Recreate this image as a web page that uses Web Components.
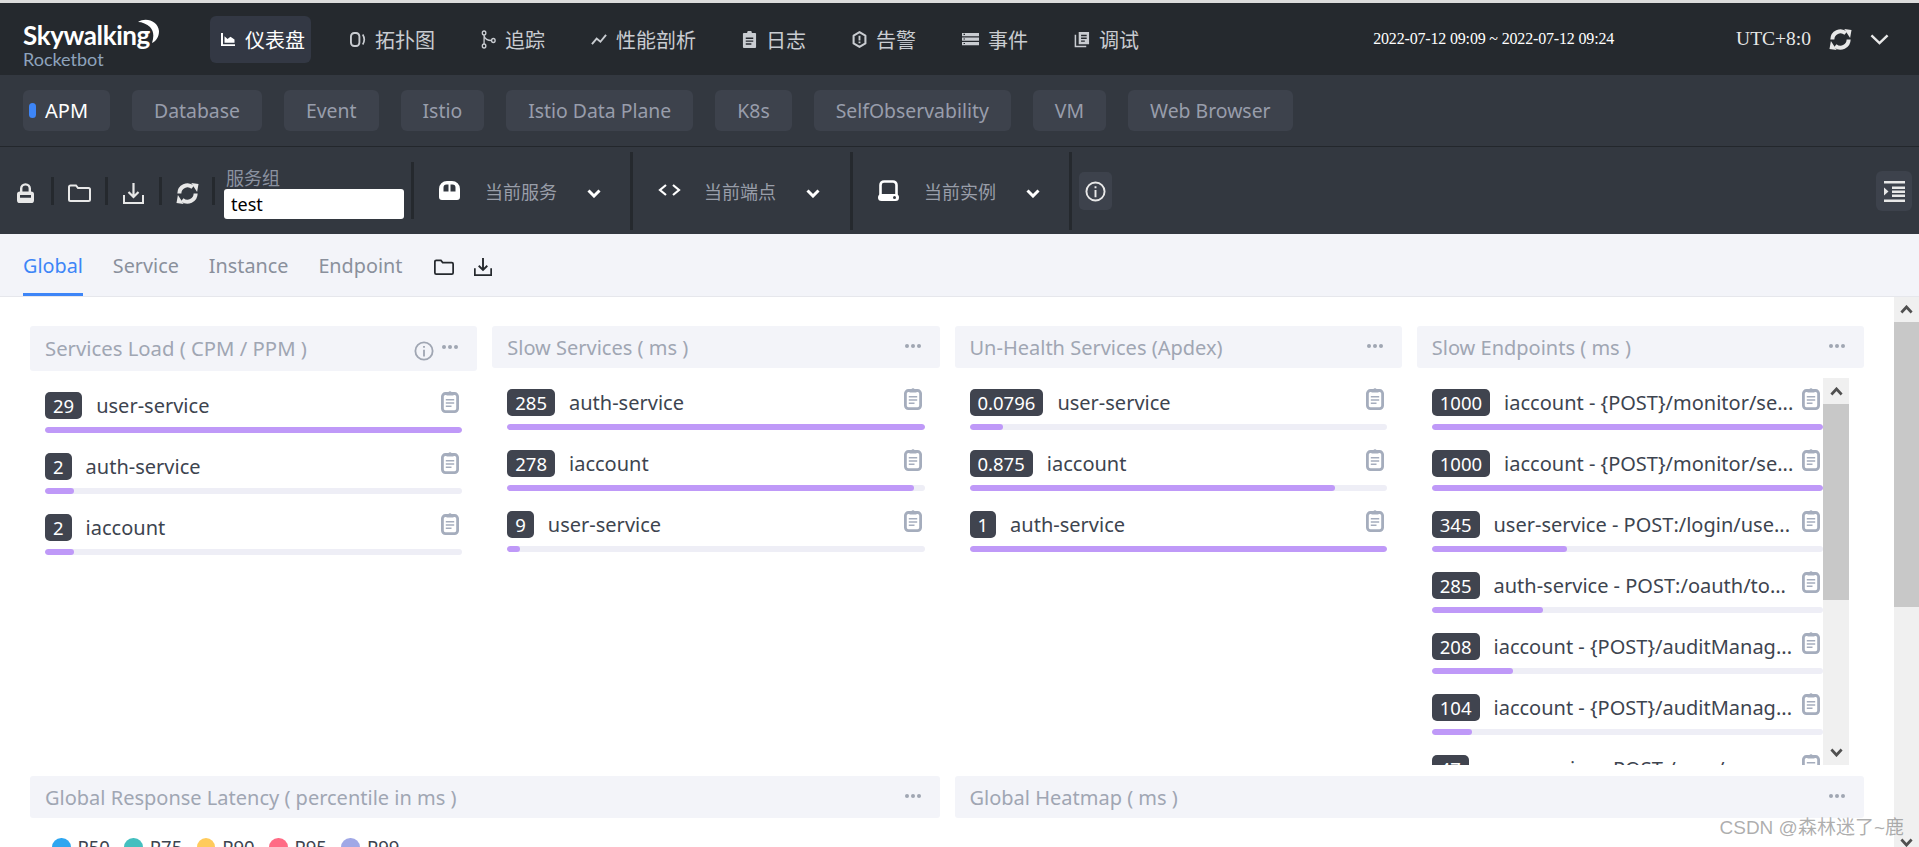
<!DOCTYPE html>
<html lang="zh">
<head>
<meta charset="utf-8">
<title>Skywalking Rocketbot</title>
<style>
  html, body { margin: 0; height: 100%; }
  body { height: 847px; overflow: hidden; background: #fff; border-top: 3px solid #dcdcdc; box-sizing: border-box;
    font-family: "Noto Sans", "Noto Sans CJK SC", sans-serif; position: relative; }
  .main { display: flex; height: 550px; overflow: hidden; }
</style>
</head>
<body>
  <sw-header>
    <sw-nav-item icon="dashboard" active>仪表盘</sw-nav-item>
    <sw-nav-item icon="topology">拓扑图</sw-nav-item>
    <sw-nav-item icon="trace">追踪</sw-nav-item>
    <sw-nav-item icon="profile">性能剖析</sw-nav-item>
    <sw-nav-item icon="log">日志</sw-nav-item>
    <sw-nav-item icon="alarm">告警</sw-nav-item>
    <sw-nav-item icon="event">事件</sw-nav-item>
    <sw-nav-item icon="debug">调试</sw-nav-item>
  </sw-header>

  <sw-layer-bar>
    <sw-layer-tab active>APM</sw-layer-tab>
    <sw-layer-tab>Database</sw-layer-tab>
    <sw-layer-tab>Event</sw-layer-tab>
    <sw-layer-tab>Istio</sw-layer-tab>
    <sw-layer-tab>Istio Data Plane</sw-layer-tab>
    <sw-layer-tab>K8s</sw-layer-tab>
    <sw-layer-tab>SelfObservability</sw-layer-tab>
    <sw-layer-tab>VM</sw-layer-tab>
    <sw-layer-tab>Web Browser</sw-layer-tab>
  </sw-layer-bar>

  <sw-toolbar>
    <sw-selector icon="service" style="--w:219px">当前服务</sw-selector>
    <sw-selector icon="code">当前端点</sw-selector>
    <sw-selector icon="instance" style="--w:219px">当前实例</sw-selector>
  </sw-toolbar>

  <sw-tabs>
    <sw-tab active>Global</sw-tab>
    <sw-tab>Service</sw-tab>
    <sw-tab>Instance</sw-tab>
    <sw-tab>Endpoint</sw-tab>
  </sw-tabs>

  <div class="main">
    <sw-grid>
      <sw-panel heading="Services Load ( CPM / PPM )" info>
        <sw-rank-item value="29" pct="100">user-service</sw-rank-item>
        <sw-rank-item value="2" pct="7">auth-service</sw-rank-item>
        <sw-rank-item value="2" pct="7">iaccount</sw-rank-item>
      </sw-panel>
      <sw-panel heading="Slow Services ( ms )">
        <sw-rank-item value="285" pct="100">auth-service</sw-rank-item>
        <sw-rank-item value="278" pct="97.5">iaccount</sw-rank-item>
        <sw-rank-item value="9" pct="3">user-service</sw-rank-item>
      </sw-panel>
      <sw-panel heading="Un-Health Services (Apdex)">
        <sw-rank-item value="0.0796" pct="8">user-service</sw-rank-item>
        <sw-rank-item value="0.875" pct="87.5">iaccount</sw-rank-item>
        <sw-rank-item value="1" pct="100">auth-service</sw-rank-item>
      </sw-panel>
      <sw-panel heading="Slow Endpoints ( ms )" scroll>
        <sw-rank-item value="1000" pct="100">iaccount - {POST}/monitor/se...</sw-rank-item>
        <sw-rank-item value="1000" pct="100">iaccount - {POST}/monitor/se...</sw-rank-item>
        <sw-rank-item value="345" pct="34.5">user-service - POST:/login/use...</sw-rank-item>
        <sw-rank-item value="285" pct="28.5">auth-service - POST:/oauth/to...</sw-rank-item>
        <sw-rank-item value="208" pct="20.8">iaccount - {POST}/auditManag...</sw-rank-item>
        <sw-rank-item value="104" pct="10.4">iaccount - {POST}/auditManag...</sw-rank-item>
        <sw-rank-item value="47" pct="4.7">user-service - POST:/user/comp...</sw-rank-item>
      </sw-panel>
      <sw-panel heading="Global Response Latency ( percentile in ms )" style="grid-column: span 2">
        <sw-legend>
          <sw-legend-item color="#2ea6f0">P50</sw-legend-item>
          <sw-legend-item color="#44bfbf">P75</sw-legend-item>
          <sw-legend-item color="#ffcb5c">P90</sw-legend-item>
          <sw-legend-item color="#ff6b85">P95</sw-legend-item>
          <sw-legend-item color="#a0a8e6">P99</sw-legend-item>
        </sw-legend>
      </sw-panel>
      <sw-panel heading="Global Heatmap ( ms )" style="grid-column: span 2"></sw-panel>
    </sw-grid>
    <sw-scrollbar main></sw-scrollbar>
  </div>

  <sw-watermark>CSDN @森林迷了~鹿</sw-watermark>

<script>
// all svg icons, drawn with currentColor
const ICONS = {
  dashboard: ['0 0 16 16', '<path fill="currentColor" d="M1 1h2v12h12v2H1z"/><path fill="currentColor" d="M4.500 11.500V4.500l3 3 3-2.500 4 3v3.500z"/>'],
  topology: ['0 0 17 17', '<rect x="1" y="2" width="9" height="13" rx="3.500" fill="none" stroke="currentColor" stroke-width="2"/><path d="M13.500 3.500c2 3 2 7 0 10" fill="none" stroke="currentColor" stroke-width="1.800"/>'],
  trace: ['0 0 17 19', '<g fill="none" stroke="currentColor" stroke-width="1.500"><circle cx="3.500" cy="3" r="2"/><circle cx="3.500" cy="16" r="2"/><circle cx="14" cy="10.500" r="2"/><path d="M3.500 5v9M3.500 6c1 3 4 4.500 8.500 4.500"/></g>'],
  profile: ['0 0 17 13', '<path d="M1 12l5-6 4 3.500L16 2" fill="none" stroke="currentColor" stroke-width="2"/>'],
  log: ['0 0 16 18', '<path fill="currentColor" fill-rule="evenodd" d="M2 2h3.500a2.500 2.500 0 0 1 5 0H14a1 1 0 0 1 1 1v14a1 1 0 0 1-1 1H2a1 1 0 0 1-1-1V3a1 1 0 0 1 1-1zM4 7v1.500h8V7zM4 10v1.500h8V10zM4 13v1.500h6V13z"/>'],
  alarm: ['0 0 16 18', '<path d="M8 1.200l6.300 3.600v8.400L8 16.800l-6.300-3.600V4.800z" fill="none" stroke="currentColor" stroke-width="2.200" stroke-linejoin="round"/><path fill="currentColor" d="M7 5h2v5H7zM7 11h2v2H7z"/>'],
  event: ['0 0 17 15', '<path fill="currentColor" d="M0 1h17v3.500H0zM0 5.800h17v3.500H0zM0 10.600h17v3.500H0z"/><path fill="#25292e" d="M1.500 2h1.500v1.200H1.500zM1.500 6.900h1.500v1.200H1.500zM1.500 11.700h1.500v1.200H1.500z"/>'],
  debug: ['0 0 17 18', '<path d="M1.500 4v12.500H13" fill="none" stroke="currentColor" stroke-width="1.600"/><path fill="currentColor" fill-rule="evenodd" d="M5 1h11v13H5zM7.500 4v1.500h6V4zM7.500 7v1.500h6V7zM7.500 10v1.500h4V10z"/>'],
  refresh: ['0 0 24 22', '<g fill="none" stroke="currentColor" stroke-width="4.200"><path d="M3.500 11a8.500 8.500 0 0 1 14-6.500"/><path d="M20.500 11a8.500 8.500 0 0 1-14 6.500"/></g><path fill="currentColor" d="M16 0l7.500 1-1.500 8.500zM8 22l-7.500-1 1.500-8.500z"/>'],
  chevron: ['0 0 20 12', '<path d="M1.500 1.500L10 10l8.500-8.500" fill="none" stroke="currentColor" stroke-width="2.500"/>'],
  chevronBold: ['0 0 14 9', '<path d="M1.500 1.500L7 7l5.500-5.500" fill="none" stroke="currentColor" stroke-width="3"/>'],
  chevronUp: ['0 0 14 9', '<path d="M1.500 7.500L7 2l5.500 5.500" fill="none" stroke="currentColor" stroke-width="3"/>'],
  lock: ['0 0 17 21', '<path d="M4.200 10V5.800a4.300 4.300 0 0 1 8.600 0V10" fill="none" stroke="currentColor" stroke-width="2.400"/><path fill="currentColor" fill-rule="evenodd" d="M3 9h11a3 3 0 0 1 3 3v6a3 3 0 0 1-3 3H3a3 3 0 0 1-3-3v-6a3 3 0 0 1 3-3zM3 12.500v3h11v-3z"/>'],
  folder: ['0 0 23 18', '<path d="M1 3a1.500 1.500 0 0 1 1.500-1.500H8L10 4h10.500A1.500 1.500 0 0 1 22 5.500v10a1.500 1.500 0 0 1-1.500 1.500h-18A1.500 1.500 0 0 1 1 15.500z" fill="none" stroke="currentColor" stroke-width="2"/>'],
  download: ['0 0 21 21', '<path d="M1 12v8h19v-8" fill="none" stroke="currentColor" stroke-width="2"/><path d="M10.500 0v13M5.500 9l5 5 5-5" fill="none" stroke="currentColor" stroke-width="2.200"/>'],
  service: ['0 0 21 19', '<path fill="currentColor" fill-rule="evenodd" d="M8 0h5a8 8 0 0 1 8 8v8a3 3 0 0 1-3 3H3a3 3 0 0 1-3-3V8a8 8 0 0 1 8-8zM4.500 4v6.500h5V3.500h-2A3 3 0 0 0 4.500 6.500zM11.500 3.500v7h5V6.500a3 3 0 0 0-3-3z"/>'],
  code: ['0 0 23 12', '<path d="M8 1L2 6l6 5M15 1l6 5-6 5" fill="none" stroke="currentColor" stroke-width="2.200"/>'],
  instance: ['0 0 21 21', '<path d="M2.500 15V5a3.500 3.500 0 0 1 3.500-3.500h9A3.500 3.500 0 0 1 18.500 5v10" fill="none" stroke="currentColor" stroke-width="2.600"/><rect x="0" y="14" width="21" height="7" rx="3.500" fill="currentColor"/><circle cx="16.500" cy="17.500" r="1.500" fill="#333840"/>'],
  info: ['0 0 22 22', '<circle cx="11" cy="11" r="9.500" fill="none" stroke="currentColor" stroke-width="2"/><path fill="currentColor" d="M10 9.500h2V17h-2zM10 5.500h2v2h-2z"/>'],
  indent: ['0 0 21 21', '<path fill="currentColor" d="M0 0h21v2.500H0zM8 5.500h13v2.500H8zM8 9.500h13v2.500H8zM8 13.500h13v2.500H8zM0 18.500h21V21H0zM0 6.500l4.500 4L0 14.500z"/>'],
  clipboard: ['0 0 18 23', '<rect x="1.400" y="3.500" width="15.200" height="18.100" rx="3" fill="none" stroke="currentColor" stroke-width="2.800"/><path fill="currentColor" d="M5.500 2.500h1.800a1.800 1.800 0 0 1 3.400 0h1.800v3h-7zM4.800 9h8.400v1.400H4.800zM4.800 12.300h8.400v1.400H4.800zM4.800 15.600h5.700v1.400H4.800z"/>'],
  dots: ['0 0 16 4', '<circle cx="2" cy="2" r="2" fill="currentColor"/><circle cx="8" cy="2" r="2" fill="currentColor"/><circle cx="14" cy="2" r="2" fill="currentColor"/>'],
};

class SwIcon extends HTMLElement {
  connectedCallback() {
    const [box, body] = ICONS[this.getAttribute('name')];
    const w = this.getAttribute('w') || 16;
    const h = this.getAttribute('h') || 16;
    this.attachShadow({ mode: 'open' });
    this.shadowRoot.innerHTML = `
    <style>
      :host { display: inline-flex; flex: none; width: ${w}px; height: ${h}px; }
      svg { width: 100%; height: 100%; display: block; }
    </style>
    <svg viewBox="${box}" preserveAspectRatio="none">${body}</svg>`;
  }
}
customElements.define('sw-icon', SwIcon);

class SwHeader extends HTMLElement {
  constructor() {
    super();
    this.attachShadow({ mode: 'open' });
    this.shadowRoot.innerHTML = `
    <style>
      :host { display: flex; align-items: center; height: 72px; background: #25292e; color: #fff; padding: 0 30px 0 23px; }
      .logo { width: 187px; flex: none; position: relative; height: 50px; margin-top: 1px; }
      .sky { font: 700 26px/30px "Lato", sans-serif; letter-spacing: -0.4px; display: block; margin-top: 5px; }
      .moon { position: absolute; left: 115px; top: 4px; }
      .rocket { font: 400 18px/19px "Lato", sans-serif; color: #8ea3bc; display: block; margin-top: 0; }
      nav { display: flex; gap: 29px; }
      .date { margin-left: auto; font: 16px "Liberation Serif", serif; letter-spacing: -.17px; white-space: nowrap; }
      .utc { margin-left: 122px; font: 19.500px "Liberation Serif", serif; color: #e8e8e8; }
      sw-icon { color: #e8e8e8; }
      .sync { margin-left: 18px; }
      .more { margin-left: 18px; }
    </style>
    <div class="logo">
      <span class="sky">Skywalking</span>
      <svg class="moon" width="22" height="26" viewBox="0 0 22 26"><path fill="#fff" d="M0 3C8-2 20 2 21 12c0 6-3 10-7 12 2-6 2-12-2-16C9 5 4 3 0 3z"/></svg>
      <span class="rocket">Rocketbot</span>
    </div>
    <nav><slot></slot></nav>
    <span class="date">2022-07-12 09:09 ~ 2022-07-12 09:24</span>
    <span class="utc">UTC+8:0</span>
    <sw-icon class="sync" name="refresh" w="23" h="21"></sw-icon>
    <sw-icon class="more" name="chevron" w="19" h="11"></sw-icon>`;
  }
}
customElements.define('sw-header', SwHeader);

class SwNavItem extends HTMLElement {
  connectedCallback() {
    const sizes = { dashboard: [16, 15], topology: [16, 17], trace: [15, 19], profile: [16, 12], log: [15, 17], alarm: [15, 17], event: [17, 14], debug: [16, 17] };
    const name = this.getAttribute('icon');
    const [w, h] = sizes[name];
    this.attachShadow({ mode: 'open' });
    this.shadowRoot.innerHTML = `
    <style>
      :host { display: flex; align-items: center; gap: 9px; height: 47px; padding: 0 7px 0 10px; border-radius: 6px;
        font: 400 20px "Noto Sans CJK SC", sans-serif; color: #c9ccd1; }
      :host([active]) { background: #333844; color: #fff; padding-right: 6px; }
    </style>
    <sw-icon name="${name}" w="${w}" h="${h}"></sw-icon><slot></slot>`;
  }
}
customElements.define('sw-nav-item', SwNavItem);

class SwLayerBar extends HTMLElement {
  constructor() {
    super();
    this.attachShadow({ mode: 'open' });
    this.shadowRoot.innerHTML = `
    <style>
      :host { display: flex; gap: 22px; height: 71px; box-sizing: content-box; padding: 0 23px; align-items: center;
        background: #333840; border-bottom: 1px solid #23272c; }
    </style>
    <slot></slot>`;
  }
}
customElements.define('sw-layer-bar', SwLayerBar);

class SwLayerTab extends HTMLElement {
  constructor() {
    super();
    this.attachShadow({ mode: 'open' });
    this.shadowRoot.innerHTML = `
    <style>
      :host { display: flex; align-items: center; height: 41px; padding: 0 22px; border-radius: 6px; background: #3d424c;
        color: #989dab; font: 400 19.400px "Noto Sans", sans-serif; white-space: nowrap; }
      :host([active]) { color: #fff; padding: 0 22px 0 6px; gap: 9px; font-size: 20px; }
      i { display: none; width: 7px; height: 15px; border-radius: 4px; background: #3d85f7; }
      :host([active]) i { display: block; }
    </style>
    <i></i><slot></slot>`;
  }
}
customElements.define('sw-layer-tab', SwLayerTab);

class SwToolbar extends HTMLElement {
  constructor() {
    super();
    this.attachShadow({ mode: 'open' });
    this.shadowRoot.innerHTML = `
    <style>
      :host { display: flex; align-items: center; height: 87px; background: #333840; color: #e8e8e8; }
      .tool { display: flex; align-items: center; justify-content: center; width: 51px; height: 28px; margin-top: 1px; border-right: 3px solid #25292e; }
      .tool.last { width: 50px; }
      .tool sw-icon { margin-top: 4px; }
      .group { width: 180px; margin: 3px 7px 0 9px; }
      .group label { display: block; font: 400 18px/24px "Noto Sans CJK SC", sans-serif; color: #8b92a0; padding-left: 2px; }
      .group input { display: block; box-sizing: border-box; width: 180px; height: 30px; margin: 0; border: 0; border-radius: 3px; background: #fff;
        padding: 0 7px; font: 18px "Noto Sans", sans-serif; color: #000; }
      .bar { width: 3px; height: 57px; background: #25292e; }
      .info { display: flex; align-items: center; justify-content: center; width: 33px; height: 38px; margin: 1px 0 0 7px; border-radius: 5px; background: #3d424c; }
      .indent { display: flex; align-items: center; justify-content: center; width: 36px; height: 40px; margin: 1px 7px 0 auto; border-radius: 6px; background: #3d424c; }
    </style>
    <div class="tool"><sw-icon name="lock" w="17" h="20"></sw-icon></div>
    <div class="tool"><sw-icon name="folder" w="23" h="18"></sw-icon></div>
    <div class="tool"><sw-icon name="download" w="21" h="21"></sw-icon></div>
    <div class="tool last"><sw-icon name="refresh" w="23" h="21"></sw-icon></div>
    <div class="group"><label>服务组</label><input value="test"></div>
    <div class="bar"></div>
    <slot></slot>
    <div class="info"><sw-icon name="info" w="21" h="21"></sw-icon></div>
    <div class="indent"><sw-icon name="indent" w="21" h="21"></sw-icon></div>`;
  }
}
customElements.define('sw-toolbar', SwToolbar);

class SwSelector extends HTMLElement {
  connectedCallback() {
    const sizes = { service: [21, 19], code: [23, 12], instance: [21, 21] };
    const name = this.getAttribute('icon');
    const [w, h] = sizes[name];
    this.attachShadow({ mode: 'open' });
    this.shadowRoot.innerHTML = `
    <style>
      :host { display: flex; align-items: center; box-sizing: border-box; width: var(--w, 220px); height: 78px; margin-top: 1px; padding-left: 25px;
        border-right: 3px solid #25292e; color: #fff; }
      .ic { width: 46px; flex: none; display: flex; }
      .ic sw-icon { margin-top: -2px; }
      .txt { width: 102px; flex: none; font: 400 18px "Noto Sans CJK SC", sans-serif; color: #999ea9; }
      .arrow { margin-top: 4px; }
    </style>
    <div class="ic"><sw-icon name="${name}" w="${w}" h="${h}"></sw-icon></div>
    <div class="txt"><slot></slot></div>
    <sw-icon class="arrow" name="chevronBold" w="14" h="9"></sw-icon>`;
  }
}
customElements.define('sw-selector', SwSelector);

class SwTabs extends HTMLElement {
  constructor() {
    super();
    this.attachShadow({ mode: 'open' });
    this.shadowRoot.innerHTML = `
    <style>
      :host { display: flex; gap: 30px; height: 62px; padding-left: 23px; background: #f3f4f9; border-bottom: 1px solid #e6e7ec; color: #25292e; }
      .acts { display: flex; align-items: center; gap: 20px; margin: 4px 0 0 2px; }
    </style>
    <slot></slot>
    <div class="acts">
      <sw-icon name="folder" w="20" h="16"></sw-icon>
      <sw-icon name="download" w="18" h="18"></sw-icon>
    </div>`;
  }
}
customElements.define('sw-tabs', SwTabs);

class SwTab extends HTMLElement {
  constructor() {
    super();
    this.attachShadow({ mode: 'open' });
    this.shadowRoot.innerHTML = `
    <style>
      :host { display: block; box-sizing: border-box; height: 62px; padding-top: 17px; font: 400 19.800px/30px "Noto Sans", sans-serif; color: #8a909c; }
      :host([active]) { color: #3d85f7; border-bottom: 3px solid #3d85f7; }
    </style>
    <slot></slot>`;
  }
}
customElements.define('sw-tab', SwTab);

class SwGrid extends HTMLElement {
  constructor() {
    super();
    this.attachShadow({ mode: 'open' });
    this.shadowRoot.innerHTML = `
    <style>
      :host { flex: 1; min-width: 0; display: grid; grid-template-columns: repeat(4, 1fr); grid-template-rows: 439px 200px;
        column-gap: 15px; row-gap: 11px; padding: 29px 30px 0 30px; overflow: hidden; }
    </style>
    <slot></slot>`;
  }
}
customElements.define('sw-grid', SwGrid);

class SwPanel extends HTMLElement {
  connectedCallback() {
    const info = this.hasAttribute('info');
    const scroll = this.hasAttribute('scroll');
    this.attachShadow({ mode: 'open' });
    this.shadowRoot.innerHTML = `
    <style>
      :host { display: flex; flex-direction: column; min-width: 0; min-height: 0; }
      header { display: flex; align-items: center; box-sizing: border-box; height: ${info ? 45 : 42}px; flex: none; padding: 0 19px ${info ? 2 : 0}px 15px; border-radius: 3px;
        background: #f3f4f9; color: #a0a6b3; font: 400 ${info ? 20.300 : 20}px "Noto Sans", sans-serif; white-space: nowrap; }
      .title { flex: 1; }
      .i { margin: 6px 8px 0 0; }
      .d { margin-top: -2px; }
      .body { flex: 1; min-height: 0; display: flex; margin: 10px 15px 0; overflow: hidden; }
      .list { flex: 1; min-width: 0; padding-top: 11px; overflow: hidden; }
    </style>
    <header>
      <span class="title">${this.getAttribute('heading')}</span>
      ${info ? '<sw-icon class="i" name="info" w="20" h="20"></sw-icon>' : ''}
      <sw-icon class="d" name="dots" w="16" h="4"></sw-icon>
    </header>
    <div class="body">
      <div class="list"><slot></slot></div>
      ${scroll ? '<sw-scrollbar></sw-scrollbar>' : ''}
    </div>`;
  }
}
customElements.define('sw-panel', SwPanel);

class SwRankItem extends HTMLElement {
  connectedCallback() {
    this.attachShadow({ mode: 'open' });
    this.shadowRoot.innerHTML = `
    <style>
      :host { display: block; margin-bottom: 20px; }
      .row { display: flex; align-items: center; height: 27px; margin-bottom: 8px; white-space: nowrap; }
      .val { flex: none; height: 27px; padding: 0 8px; border-radius: 5px; background: #40444f; color: #fff; font: 400 18.500px/27px "Noto Sans", sans-serif; }
      .name { flex: 1; min-width: 0; margin-left: 14px; overflow: hidden; color: #3d444f; font: 400 20px/26px "Noto Sans", sans-serif; }
      sw-icon { align-self: flex-start; margin: -2px 3px 0 3px; color: #a5adbd; }
      .track { height: 6px; border-radius: 3px; background: #eeeef6; overflow: hidden; }
      .fill { height: 100%; border-radius: 3px; background: #bf99f8; width: ${this.getAttribute('pct')}%; }
    </style>
    <div class="row">
      <span class="val">${this.getAttribute('value')}</span>
      <span class="name"><slot></slot></span>
      <sw-icon name="clipboard" w="18" h="23"></sw-icon>
    </div>
    <div class="track"><div class="fill"></div></div>`;
  }
}
customElements.define('sw-rank-item', SwRankItem);

class SwScrollbar extends HTMLElement {
  connectedCallback() {
    const main = this.hasAttribute('main');
    this.attachShadow({ mode: 'open' });
    this.shadowRoot.innerHTML = `
    <style>
      :host { display: flex; flex-direction: column; flex: none; width: ${main ? 25 : 26}px; background: #f0f0f0; color: #505050; }
      .btn { flex: none; height: ${main ? 25 : 26}px; display: flex; justify-content: center; align-items: center; }
      .thumb { flex: none; height: ${main ? 285 : 196}px; background: #c8c8c8; }
      .gap { flex: 1; }
      .end { align-items: ${main ? 'flex-end' : 'center'}; }
    </style>
    <div class="btn"><sw-icon name="chevronUp" w="13" h="9"></sw-icon></div>
    <div class="thumb"></div>
    <div class="gap"></div>
    <div class="btn end"><sw-icon name="chevronBold" w="13" h="9"></sw-icon></div>`;
  }
}
customElements.define('sw-scrollbar', SwScrollbar);

class SwLegend extends HTMLElement {
  constructor() {
    super();
    this.attachShadow({ mode: 'open' });
    this.shadowRoot.innerHTML = `
    <style>
      :host { display: flex; gap: 14.500px; margin-top: -1px; padding-left: 7px; }
    </style>
    <slot></slot>`;
  }
}
customElements.define('sw-legend', SwLegend);

class SwLegendItem extends HTMLElement {
  connectedCallback() {
    this.attachShadow({ mode: 'open' });
    this.shadowRoot.innerHTML = `
    <style>
      :host { display: flex; gap: 7px; color: #3d444f; font: 400 18.500px/18px "Noto Sans", sans-serif; }
      i { width: 18.500px; height: 18.500px; border-radius: 50%; background: ${this.getAttribute('color')}; }
    </style>
    <i></i><slot></slot>`;
  }
}
customElements.define('sw-legend-item', SwLegendItem);

// the csdn mark lies over the page, so this one is absolute
class SwWatermark extends HTMLElement {
  constructor() {
    super();
    this.attachShadow({ mode: 'open' });
    this.shadowRoot.innerHTML = `
    <style>
      :host { position: absolute; right: 15px; top: 813px; color: rgba(120, 120, 120, .6);
        font: 19px/24px "Liberation Sans", "Noto Sans CJK SC", sans-serif; white-space: nowrap; }
    </style>
    <slot></slot>`;
  }
}
customElements.define('sw-watermark', SwWatermark);
</script>
</body>
</html>
